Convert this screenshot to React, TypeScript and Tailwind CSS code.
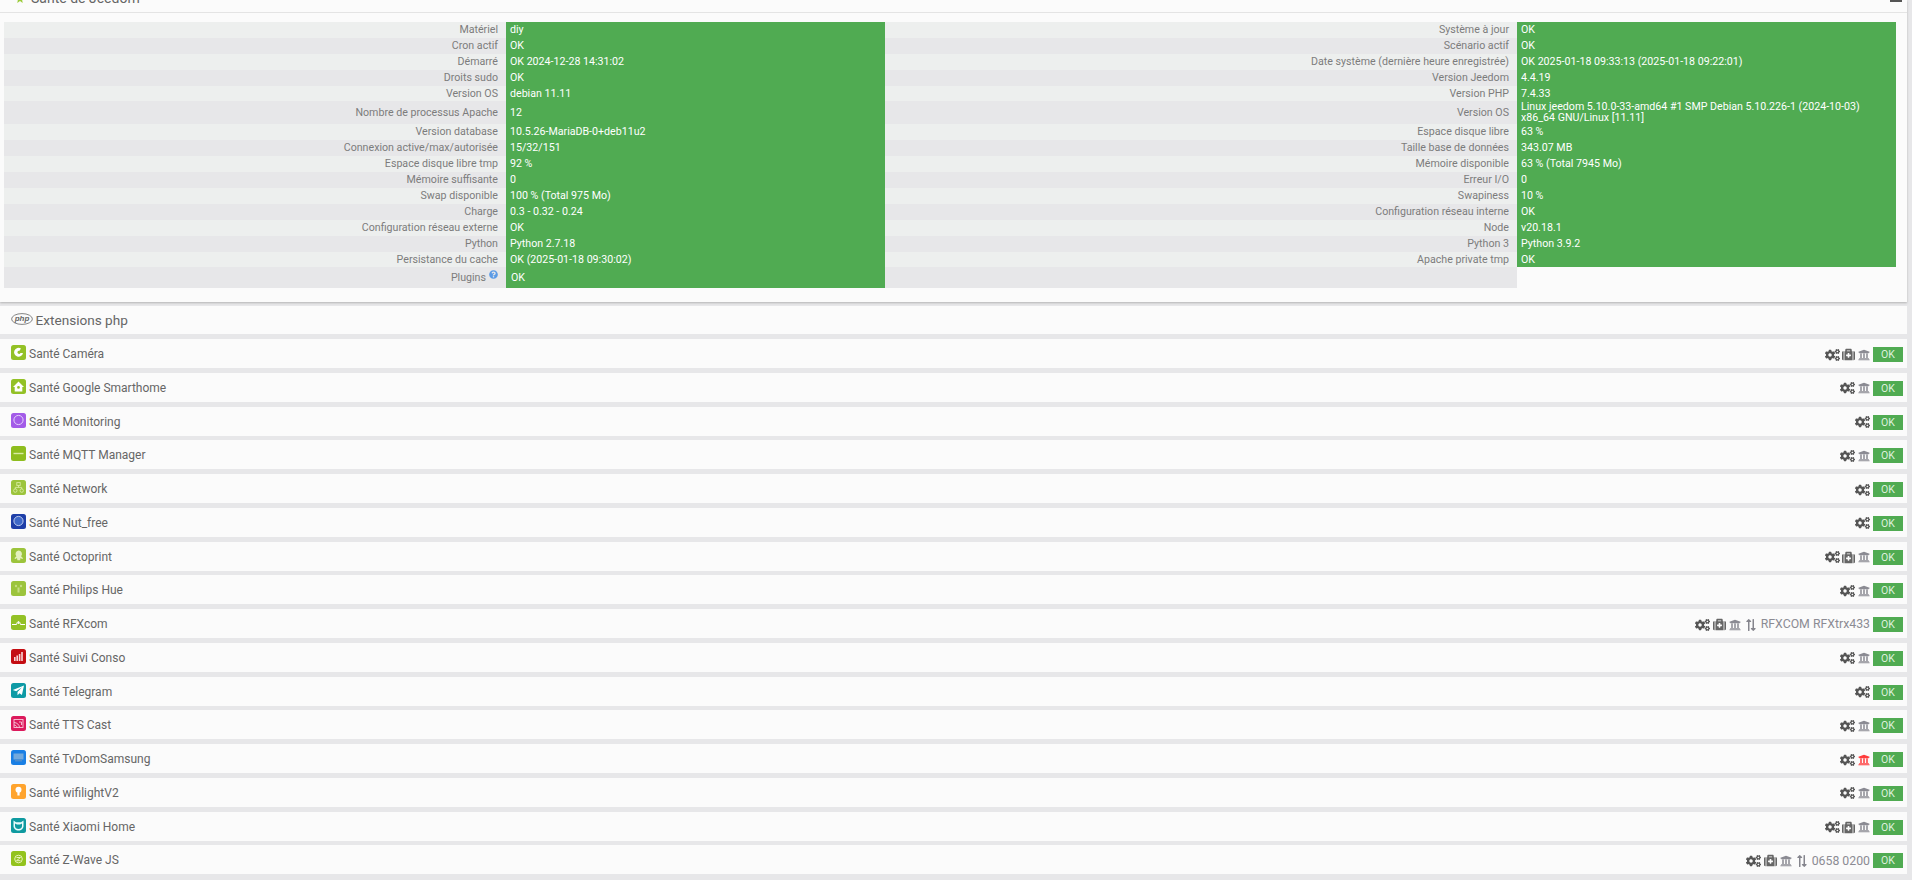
import React from "react";
import { FaCogs, FaMedkit, FaUniversity, FaExchangeAlt, FaQuestionCircle } from "react-icons/fa";

type P = { name: string; c: string; icon: React.ReactNode; med?: boolean; bank?: boolean | "red"; port?: string };

const W = "#ffffff";
const plugins: P[] = [
  { name: "Caméra", c: "#93c126", med: true, bank: true, icon: <path d="M10 3.5a4.5 4.5 0 1 0 2 4.5h-2.5a1.6 1.6 0 1 1-1-2.2z" fill={W} /> },
  { name: "Google Smarthome", c: "#93c126", bank: true, icon: <path d="M7.5 2.5 2 8h1.7v4.5h7.6V8H13zM7.5 7a1.4 1.4 0 1 1 0 2.8 1.4 1.4 0 0 1 0-2.8z" fill={W} /> },
  { name: "Monitoring", c: "#a35be8", icon: <circle cx="7.5" cy="7" r="4.6" fill="none" stroke="#e6d2fb" strokeWidth="1" /> },
  { name: "MQTT Manager", c: "#8ebd1e", bank: true, icon: <rect x="2.5" y="6.8" width="10" height="1.4" fill="#d8eba0" /> },
  { name: "Network", c: "#9cc43c", bank: false, icon: <g fill="none" stroke="#d8eba0" strokeWidth="0.9"><rect x="5.8" y="2.6" width="3.4" height="2.8" /><circle cx="4.3" cy="10.6" r="1.7" /><circle cx="10.7" cy="10.6" r="1.7" /><path d="M7.5 5.4v2M4.3 9V7.4h6.4V9" /></g> },
  { name: "Nut_free", c: "#1f3fa8", icon: <circle cx="7.5" cy="7" r="4.6" fill="#3e68c8" stroke="#c9d6f2" strokeWidth="0.9" /> },
  { name: "Octoprint", c: "#9cc43c", med: true, bank: true, icon: <path d="M7.5 2.5a3.5 3.5 0 0 1 2.6 5.8l2 2-1 .7-1.6-1 -.4 2.2H6.4l-.4-2.2-1.6 1-1-.7 2-2A3.5 3.5 0 0 1 7.5 2.5z" fill="#e4f0c0" /> },
  { name: "Philips Hue", c: "#9cc43c", bank: true, icon: <g fill="#c5dd84"><circle cx="5" cy="5" r="1.2" /><circle cx="10" cy="5" r="1.2" /><rect x="6.5" y="6.5" width="2" height="5" /></g> },
  { name: "RFXcom", c: "#93c126", med: true, bank: true, port: "RFXCOM RFXtrx433", icon: <g><path d="M1 9.5h4.5c.5-2 1.2-3 2-3s1.5 1 2 3H14" fill="none" stroke={W} strokeWidth="1" /><circle cx="7.5" cy="8" r="1" fill={W} /></g> },
  { name: "Suivi Conso", c: "#c40d12", bank: true, icon: <g fill="#f7d6d6"><rect x="3" y="8" width="1.6" height="4" /><rect x="5.4" y="6.5" width="1.6" height="5.5" /><rect x="7.8" y="5" width="1.6" height="7" /><rect x="10.2" y="3" width="1.6" height="9" /></g> },
  { name: "Telegram", c: "#0e9aa5", icon: <path d="M13 2.5 1.8 7l3.4 1.3L11 4.3 6.5 9v3.3l2-2 2.4 1.8z" fill={W} /> },
  { name: "TTS Cast", c: "#dc1a5c", bank: true, icon: <g fill="none" stroke="#f8c8da" strokeWidth="0.9"><rect x="3" y="3.5" width="9" height="8" /><path d="M3 6.5c3 0 5.5 2.5 5.5 5M3 9c1.6 0 3 1.3 3 2.5M8 6h2.5v3" /></g> },
  { name: "TvDomSamsung", c: "#1a7fe4", bank: "red", icon: <g><rect x="2.5" y="3.5" width="10" height="6" fill="#73a9dc" /><rect x="4" y="9.5" width="7" height="2" fill="#4d8ccc" /></g> },
  { name: "wifilightV2", c: "#ffa42e", bank: true, icon: <g fill={W}><circle cx="7.5" cy="5.8" r="3" /><rect x="6.4" y="8" width="2.2" height="3.5" /></g> },
  { name: "Xiaomi Home", c: "#0f9aa0", med: true, bank: true, icon: <path d="M2.5 2.5l2.5 1.7h5l2.5-1.7v5.5c0 2.6-2.2 4.5-5 4.5s-5-1.9-5-4.5zM4 5.4V8c0 1.8 1.5 3 3.5 3s3.5-1.2 3.5-3V5.4L9 6.5H6z" fill="#e8fbfb" fillRule="evenodd" /> },
  { name: "Z-Wave JS", c: "#93c31d", med: true, bank: true, port: "0658 0200", icon: <g fill="none" stroke="#e6f2b8" strokeWidth="1"><circle cx="7.5" cy="8" r="3.8" /><path d="M5.5 6.5h4l-4 3.2h4" /></g> },
];

const rowsData: [string, string, string, string, boolean?][] = [
  ["Matériel", "diy", "Système à jour", "OK"],
  ["Cron actif", "OK", "Scénario actif", "OK"],
  ["Démarré", "OK 2024-12-28 14:31:02", "Date système (dernière heure enregistrée)", "OK 2025-01-18 09:33:13 (2025-01-18 09:22:01)"],
  ["Droits sudo", "OK", "Version Jeedom", "4.4.19"],
  ["Version OS", "debian 11.11", "Version PHP", "7.4.33"],
  ["Nombre de processus Apache", "12", "Version OS", "Linux jeedom 5.10.0-33-amd64 #1 SMP Debian 5.10.226-1 (2024-10-03) x86_64 GNU/Linux [11.11]", true],
  ["Version database", "10.5.26-MariaDB-0+deb11u2", "Espace disque libre", "63 %"],
  ["Connexion active/max/autorisée", "15/32/151", "Taille base de données", "343.07 MB"],
  ["Espace disque libre tmp", "92 %", "Mémoire disponible", "63 % (Total 7945 Mo)"],
  ["Mémoire suffisante", "0", "Erreur I/O", "0"],
  ["Swap disponible", "100 % (Total 975 Mo)", "Swapiness", "10 %"],
  ["Charge", "0.3 - 0.32 - 0.24", "Configuration réseau interne", "OK"],
  ["Configuration réseau externe", "OK", "Node", "v20.18.1"],
  ["Python", "Python 2.7.18", "Python 3", "Python 3.9.2"],
  ["Persistance du cache", "OK (2025-01-18 09:30:02)", "Apache private tmp", "OK"],
];

function Row({ label, value, i, tall }: { label: string; value: string; i: number; tall?: boolean }) {
  const bg = i % 2 === 0 ? "bg-[#edefee]" : "bg-[#e7e7e9]";
  return (
    <>
      <div className={`${bg} flex items-center justify-end pr-[8px] text-[#7c7c7c]`}>{label}</div>
      <div className={`bg-[#50ab52] flex items-center pl-[4px] pr-[30px] text-white ${tall ? "leading-[10.5px]" : ""}`}>{value}</div>
    </>
  );
}

function PluginRow({ p }: { p: P }) {
  return (
    <div className="h-[29px] bg-[#fbfbfb] flex items-center pl-[11px] pr-[4px]">
      <svg width="15" height="15" viewBox="0 0 15 15" className="shrink-0 -mt-[2px]">
        <rect width="15" height="15" rx="2.5" fill={p.c} />
        {p.icon}
      </svg>
      <span className="ml-[3px] pt-[1px] text-[12px] text-[#666666]">Santé {p.name}</span>
      <div className="ml-auto flex items-center pt-[2px]">
        <FaCogs className="w-[15px] h-[12px] text-[#555555]" />
        {p.med && <FaMedkit className="ml-[2.5px] w-[13px] h-[13px] text-[#666666]" />}
        {p.bank && <FaUniversity className={`ml-[3px] w-[12px] h-[12px] ${p.bank === "red" ? "text-[#ff3b3b]" : "text-[#8b8b93]"}`} />}
        {p.port && (
          <>
            <FaExchangeAlt className="ml-[4px] w-[12px] h-[12px] rotate-90 text-[#85858d]" />
            <span className="ml-[4px] text-[12.3px] text-[#8b8b93]">{p.port}</span>
          </>
        )}
        <span className="ml-[3px] w-[30px] h-[15px] bg-[#50ab52] text-[#dff0df] text-[10.5px] leading-[15px] text-center">OK</span>
      </div>
    </div>
  );
}

export default function App() {
  return (
    <div className="h-[880px] w-[1912px] overflow-hidden bg-[#e7e7e9] font-['Roboto',sans-serif] pr-[5px]">
      <section className="h-[302px] bg-[#fbfbfb] shadow-[0_1px_2px_#b5b5b5]">
        <header className="h-[13px] border-b border-[#e4e4e4] flex items-end justify-between overflow-hidden pl-[15px] pr-[5px]">
          <div className="flex items-center gap-[6px] h-[18px] mb-[5px] shrink-0 text-[14px] text-[#666666]">
            <svg width="10" height="10" viewBox="0 0 10 10" className="text-[#9ccc3c]" fill="currentColor"><path d="M5 0l1.3 3.2L10 4 7 6l.7 4L5 8 2.3 10 3 6 0 4l3.7-.8z" /></svg>
            <span>Santé de Jeedom</span>
          </div>
          <div className="w-[12px] h-[2px] mb-[10px] bg-[#555555]" />
        </header>
        <div className="mt-[9px] ml-[4px] mr-[11px] grid text-[10.65px] leading-[16px] grid-cols-[502px_379px_632px_379px] grid-rows-[repeat(5,15.9px)_23px_repeat(9,15.9px)_21px]">
          {rowsData.map((r, i) => (
            <React.Fragment key={i}>
              <Row label={r[0]} value={r[1]} i={i} />
              <Row label={r[2]} value={r[3]} i={i} tall={r[4]} />
            </React.Fragment>
          ))}
          <div className="bg-[#e7e7e9] flex items-center justify-end pr-[8px] text-[#7c7c7c]">
            Plugins
            <FaQuestionCircle className="ml-[3px] -mt-[7px] w-[9px] h-[9px] text-[#5b9be6]" />
          </div>
          <div className="bg-[#50ab52] flex items-center pl-[5px] text-white">OK</div>
          <div className="bg-[#e7e7e9]" />
          <div className="bg-[#fbfbfb]" />
        </div>
      </section>
      <div className="mt-[4px] flex flex-col gap-[4.75px]">
        <div className="h-[28.25px] bg-[#fbfbfb] flex items-center pl-[11px] pt-[1px]">
          <svg width="22" height="12" viewBox="0 0 22 12" className="-mt-[4px]">
            <ellipse cx="11" cy="6" rx="10.4" ry="5.4" fill="none" stroke="#777777" strokeWidth="0.9" />
            <text x="11" y="8.4" textAnchor="middle" fontSize="8" fontStyle="italic" fontWeight="700" fontFamily="Liberation Sans" fill="#666666">php</text>
          </svg>
          <span className="ml-[2.5px] text-[13.6px] text-[#666666]">Extensions php</span>
        </div>
        {plugins.map((p) => (
          <PluginRow key={p.name} p={p} />
        ))}
      </div>
    </div>
  );
}
